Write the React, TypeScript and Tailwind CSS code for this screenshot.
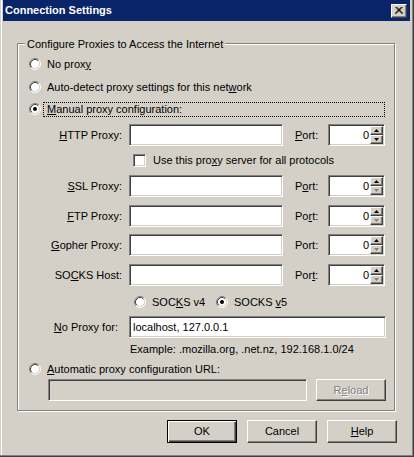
import React from "react";

const sunken =
  "border border-t-[#808080] border-l-[#808080] border-b-white border-r-white shadow-[inset_1px_1px_#404040,inset_-1px_-1px_#d4d0c8]";
const raised =
  "border border-t-white border-l-white border-b-[#404040] border-r-[#404040] shadow-[inset_-1px_-1px_#808080]";

function Radio({ checked = false }: { checked?: boolean }) {
  return (
    <svg width="12" height="12" viewBox="0 0 12 12" className="shrink-0">
      <circle cx="6" cy="6" r="5" fill="#ffffff" />
      <path d="M2.11 9.89 A5.5 5.5 0 0 1 9.89 2.11" stroke="#808080" strokeWidth="1" fill="none" />
      <path d="M9.89 2.11 A5.5 5.5 0 0 1 2.11 9.89" stroke="#ffffff" strokeWidth="1" fill="none" />
      <path d="M2.82 9.18 A4.5 4.5 0 0 1 9.18 2.82" stroke="#404040" strokeWidth="1" fill="none" />
      <path d="M9.18 2.82 A4.5 4.5 0 0 1 2.82 9.18" stroke="#d4d0c8" strokeWidth="1" fill="none" />
      {checked && <circle cx="6" cy="6" r="2" fill="#000000" />}
    </svg>
  );
}

function Spinner({ downDisabled = true }: { downDisabled?: boolean }) {
  return (
    <div className={`w-[57px] h-[22px] bg-white flex ${sunken}`}>
      <div className="flex-1 flex items-center justify-end pr-[1px]">0</div>
      <div className="w-[14px] flex flex-col py-[1px] pr-[1px]">
        <div className={`h-[9px] bg-[#d4d0c8] flex items-center justify-center ${raised}`}>
          <svg width="5" height="3" viewBox="0 0 5 3">
            <polygon points="2.5,0 5,3 0,3" fill="#000" />
          </svg>
        </div>
        <div className={`h-[9px] bg-[#d4d0c8] flex items-center justify-center ${raised}`}>
          <svg width="5" height="3" viewBox="0 0 5 3">
            <polygon points="0,0 5,0 2.5,3" fill={downDisabled ? "#808080" : "#000"} />
          </svg>
        </div>
      </div>
    </div>
  );
}

function ProxyRow({
  label,
  port,
  mt,
  downDisabled = true,
}: {
  label: React.ReactNode;
  port: React.ReactNode;
  mt: string;
  downDisabled?: boolean;
}) {
  return (
    <div className={`flex items-center h-[22px] ${mt}`}>
      <div className="w-[104px] text-right whitespace-nowrap">{label}</div>
      <div className={`ml-[7px] w-[154px] h-[22px] bg-white ${sunken}`} />
      <div className="ml-[12px] w-[33px] whitespace-nowrap">{port}</div>
      <Spinner downDisabled={downDisabled} />
    </div>
  );
}

function Btn({ children, def = false, disabled = false, w = "w-[70px]", h = "h-[23px]" }: { children: React.ReactNode; def?: boolean; disabled?: boolean; w?: string; h?: string }) {
  return (
    <div
      className={`${w} ${h} flex items-center justify-center bg-[#d4d0c8] ${
        def
          ? "border border-black shadow-[inset_1px_1px_#ffffff,inset_-1px_-1px_#404040,inset_-2px_-2px_#808080]"
          : raised
      } ${disabled ? "text-[#808080] [text-shadow:1px_1px_#ffffff]" : ""}`}
    >
      {children}
    </div>
  );
}

export default function App() {
  return (
    <div className="w-[414px] h-[457px] bg-[#d4d0c8] flex flex-col pl-[3px] pr-[4px] pb-[4px] font-['Liberation_Sans',Arial,sans-serif] text-[11px] text-black leading-none shadow-[inset_-1px_-1px_#404040,inset_-2px_-2px_#808080,inset_1px_0_#d4d0c8,inset_2px_0_#ffffff] overflow-hidden">
      {/* Title bar */}
      <div className="h-[21px] bg-[#0a246a] flex items-center pl-[2px] pr-[3px]">
        <span className="text-white font-bold text-[11px] flex-1">Connection Settings</span>
        <div className={`w-[16px] h-[14px] bg-[#d4d0c8] flex items-center justify-center ${raised}`}>
          <svg width="8" height="7" viewBox="0 0 8 7">
            <path d="M0.5 0 L7.5 7 M7.5 0 L0.5 7 M1.5 0 L8 6.5 M6.5 0 L0 6.5" stroke="#000" strokeWidth="1" />
          </svg>
        </div>
      </div>

      {/* Group box */}
      <div className="relative mt-[22px] ml-[14px] w-[378px] h-[368px] border border-[#808080] shadow-[inset_1px_1px_#ffffff,1px_1px_#ffffff]">
        <span className="absolute left-[7px] -top-[7px] px-[2px] bg-[#d4d0c8] h-[14px] flex items-center whitespace-nowrap">
          Configure Proxies to Access the Internet
        </span>
        <div className="flex flex-col">
          {/* No proxy */}
          <div className="flex items-center h-[20px] mt-[10px] pl-[11px]">
            <Radio />
            <span className="ml-[2px] px-[3px] border border-transparent">
              No prox<u>y</u>
            </span>
          </div>
          <div className="flex items-center h-[20px] mt-[3px] pl-[11px]">
            <Radio />
            <span className="ml-[2px] px-[3px] border border-transparent">
              Auto-detect proxy settings for this net<u>w</u>ork
            </span>
          </div>
          <div className="flex items-center h-[20px] mt-[2px] pl-[11px]">
            <Radio checked />
            <span className="ml-[2px] pl-[3px] border border-dotted border-black w-[342px] h-[15px] flex items-center">
              <span>
                <u>M</u>anual proxy configuration:
              </span>
            </span>
          </div>

          <ProxyRow
            mt="mt-[5px]"
            label={
              <>
                <u>H</u>TTP Proxy:
              </>
            }
            port={
              <>
                <u>P</u>ort:
              </>
            }
            downDisabled={false}
          />

          <div className="flex items-center h-[20px] mt-[4px] pl-[115px]">
            <div className={`w-[13px] h-[13px] bg-white ${sunken}`} />
            <span className="ml-[7px]">
              Use this pro<u>x</u>y server for all protocols
            </span>
          </div>

          <ProxyRow
            mt="mt-[5px]"
            label={
              <>
                <u>S</u>SL Proxy:
              </>
            }
            port={
              <>
                P<u>o</u>rt:
              </>
            }
          />
          <ProxyRow
            mt="mt-[8px]"
            label={
              <>
                <u>F</u>TP Proxy:
              </>
            }
            port={
              <>
                Po<u>r</u>t:
              </>
            }
          />
          <ProxyRow
            mt="mt-[7px]"
            label={
              <>
                <u>G</u>opher Proxy:
              </>
            }
            port={<>Port:</>}
          />
          <ProxyRow
            mt="mt-[8px]"
            label={
              <>
                SO<u>C</u>KS Host:
              </>
            }
            port={
              <>
                Por<u>t</u>:
              </>
            }
          />

          {/* SOCKS version */}
          <div className="flex items-center h-[20px] mt-[6px] pl-[116px]">
            <div className="w-[82px] flex items-center">
              <Radio />
              <span className="ml-[2px] px-[3px] border border-transparent">
                SOC<u>K</u>S v4
              </span>
            </div>
            <Radio checked />
            <span className="ml-[2px] px-[3px] border border-transparent">
              SOCKS <u>v</u>5
            </span>
          </div>

          {/* No proxy for */}
          <div className="flex items-center h-[22px] mt-[4px]">
            <div className="w-[100px] text-right whitespace-nowrap">
              <u>N</u>o Proxy for:
            </div>
            <div className={`ml-[11px] w-[257px] h-[22px] bg-white flex items-center pl-[3px] ${sunken}`}>
              localhost, 127.0.0.1
            </div>
          </div>
          <div className="h-[16px] mt-[3px] pl-[112px] flex items-center whitespace-nowrap">
            Example: .mozilla.org, .net.nz, 192.168.1.0/24
          </div>

          {/* Auto config URL */}
          <div className="flex items-center h-[20px] mt-[2px] pl-[11px]">
            <Radio />
            <span className="ml-[2px] px-[3px] border border-transparent">
              <u>A</u>utomatic proxy configuration URL:
            </span>
          </div>
          <div className="flex items-center h-[22px]">
            <div className={`ml-[30px] w-[259px] h-[22px] bg-[#d4d0c8] ${sunken}`} />
            <div className="ml-[9px]">
              <Btn disabled h="h-[22px]">
                R<u>e</u>load
              </Btn>
            </div>
          </div>
        </div>
      </div>

      {/* Buttons */}
      <div className="flex justify-end gap-[10px] pr-[13px] mt-[9px]">
        <Btn def>OK</Btn>
        <Btn>Cancel</Btn>
        <Btn>
          <u>H</u>elp
        </Btn>
      </div>
    </div>
  );
}
